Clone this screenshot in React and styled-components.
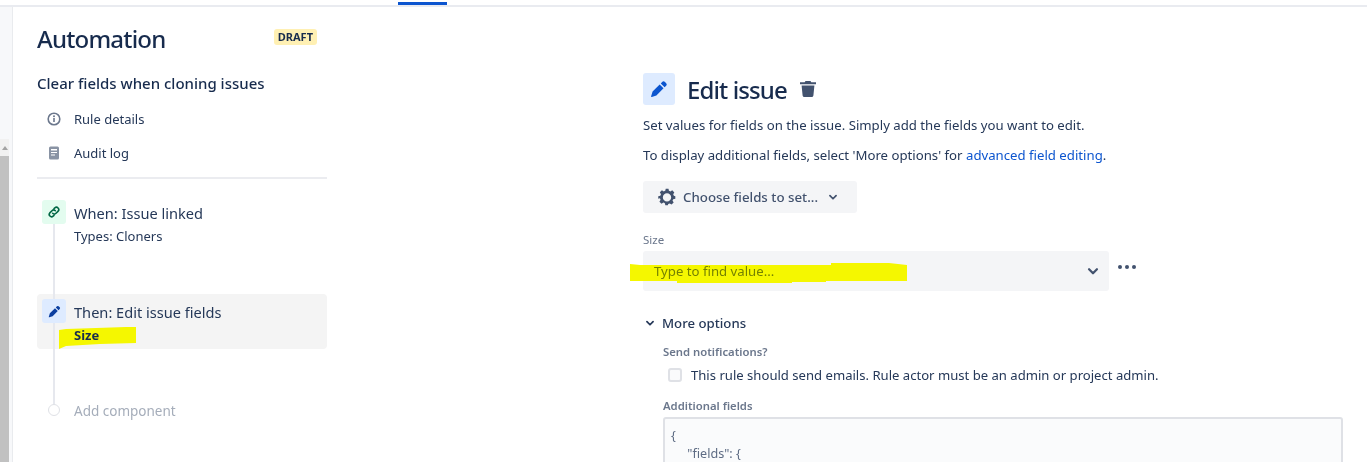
import React from "react";
import styled, { createGlobalStyle } from "styled-components";

const Global = createGlobalStyle`
  html, body { margin: 0; padding: 0; background: #fff; height: 462px; overflow: hidden; }
  body { font-family: "Noto Sans", "Open Sans", sans-serif; color: #172b4d; }
  * { box-sizing: border-box; }
`;

const Page = styled.div`
  width: 1367px; height: 462px; overflow: hidden; display: flex; flex-direction: column;
`;
const TopBar = styled.div`
  height: 7px; flex: none; padding-left: 398px; display: flex; align-items: flex-start;
  border-bottom: 2px solid #e9ebf0; background: #fff;
`;
const ActiveTab = styled.div`
  width: 49px; height: 3px; margin-top: 2px; background: #0c55cf;
`;
const Body = styled.div`
  flex: 1; display: flex; min-height: 0;
`;
const Gutter = styled.div`
  width: 13px; flex: none; display: flex; flex-direction: column; background: #f7f8fa;
  border-right: 1px solid #e9ebee;
`;
const ScrollSpace = styled.div` height: 132px; flex: none; `;
const ScrollTrack = styled.div`
  width: 9px; flex: 1; background: #f1f1f1; display: flex; flex-direction: column;
`;
const ScrollArrow = styled.div`
  height: 17px; flex: none; display: flex; align-items: center; justify-content: center;
  &::before { content: ""; border: 3px solid transparent; border-top: 0; border-bottom: 4px solid #a3a3a3; }
`;
const ScrollThumb = styled.div` flex: 1; background: #c1c1c1; `;

const Sidebar = styled.aside`
  width: 290px; flex: none; margin-left: 24px; padding-top: 16px;
`;
const SideHead = styled.div`
  display: flex; justify-content: space-between; align-items: flex-start; padding-right: 10px;
`;
const Title = styled.h1`
  margin: 0; font-size: 24px; line-height: 32px; font-weight: 500; letter-spacing: -0.8px;
`;
const Draft = styled.span`
  margin-top: 6px; background: #fff0b3; border-radius: 3px; padding: 0 4px; height: 16px;
  font-size: 11px; line-height: 16px; font-weight: 700; color: #172b4d;
`;
const RuleName = styled.h2`
  margin: 17px 0 0; font-size: 15px; line-height: 22px; font-weight: 500;
`;
const NavList = styled.nav`
  display: flex; flex-direction: column; gap: 12px; margin-top: 14px; padding: 0 0 13px 9px;
  border-bottom: 2px solid #ebecf0;
`;
const NavItem = styled.a`
  display: flex; align-items: center; gap: 12px; height: 22px; font-size: 13px; color: #253858;
  svg { flex: none; }
`;
const Timeline = styled.div`
  position: relative; margin-top: 16px;
  &::before { content: ""; position: absolute; left: 16px; top: 20px; width: 2px; height: 190px; background: #e6e8ee; z-index: 1; }
`;
const Step = styled.div`
  position: relative; display: flex; gap: 8px; padding: 5px; height: ${p => p.$h}px; border-radius: 4px;
  background: ${p => p.$active ? "#f4f4f4" : "transparent"};
  margin-bottom: ${p => p.$mb || 0}px;
`;
const StepIcon = styled.div`
  width: 24px; height: 24px; flex: none; border-radius: 3px; background: ${p => p.$bg};
  display: flex; align-items: center; justify-content: center; position: relative; z-index: 2;
`;
const StepText = styled.div` display: flex; flex-direction: column; padding-top: 1px; `;
const StepTitle = styled.div` font-size: 14.6px; line-height: 24px; color: #253858; `;
const StepSub = styled.div`
  font-size: 13px; line-height: 18px; margin-top: 2px; color: ${p => p.$bold ? "#172b4d" : "#253858"}; position: relative;
  font-weight: ${p => p.$bold ? 700 : 400};
`;
const SubLabel = styled.span` position: relative; `;
const AddRow = styled.div`
  position: relative; display: flex; align-items: center; gap: 14px; padding-left: 11px; height: 22px;
  margin-top: 51px; font-size: 13.5px; color: #a5adba;
`;
const Dot = styled.span`
  width: 12px; height: 12px; border-radius: 50%; border: 1px solid #dfe1e6; background: #fff; flex: none;
  margin-bottom: 2px; position: relative; z-index: 2;
`;

const Main = styled.main`
  margin-left: 316px; width: 700px; padding-top: 66px; flex: none;
`;
const Heading = styled.div` display: flex; align-items: center; height: 32px; `;
const HeadIcon = styled.div`
  width: 32px; height: 32px; border-radius: 3px; background: #deebff; display: flex;
  align-items: center; justify-content: center; margin-right: 12px;
`;
const HeadTitle = styled.h2`
  margin: 2px 11px 0 0; font-size: 24px; line-height: 32px; font-weight: 500; letter-spacing: -0.9px;
`;
const Para = styled.p`
  margin: 0; font-size: 13.2px; line-height: 20px; color: #253858;
  & + & { margin-top: 10px; }
  &:first-of-type { margin-top: 10px; }
`;
const Link = styled.a` color: #0c55cf; `;
const ChooseButton = styled.div`
  margin-top: 16px; width: 214px; height: 32px; border-radius: 3px; background: #f4f5f7;
  display: flex; align-items: center; padding-left: 14px; gap: 6px; font-size: 13.3px; font-weight: 500; color: #42526e;
  & > svg:last-child { margin-left: 2px; }
`;
const FieldLabel = styled.div`
  font-size: ${p => p.$bold ? 11.3 : 11.5}px; line-height: 16px; font-weight: ${p => p.$bold ? 600 : 400}; color: #6b778c;
  margin-top: ${p => p.$mt}px;
`;
const SelectRow = styled.div` display: flex; margin-top: 3px; gap: 8px; `;
const Select = styled.div`
  position: relative; width: 466px; height: 40px; border-radius: 3px; background: #f4f5f7; display: flex;
  align-items: center; justify-content: space-between; padding: 0 7px 0 11px;
`;
const Placeholder = styled.span` position: relative; font-size: 13.2px; color: #7a869a; mix-blend-mode: multiply; `;
const MoreDots = styled.svg` margin-top: 12px; `;
const Options = styled.section` margin-top: 22px; `;
const OptionsToggle = styled.div`
  display: flex; align-items: center; gap: 5px; height: 20px; font-size: 13.2px; font-weight: 500; color: #253858;
`;
const OptionsBody = styled.div` padding-left: 20px; `;
const CheckRow = styled.label`
  display: flex; align-items: center; gap: 9px; margin: 5px 0 0 5px; height: 20px; font-size: 13.1px; color: #253858;
`;
const Check = styled.span`
  width: 14px; height: 14px; border-radius: 3px; border: 2px solid #dfe1e6; background: #fafbfc; flex: none;
`;
const Code = styled.pre`
  margin: 3px 0 0; width: 680px; height: 80px; border: 2px solid #dfe1e6; border-radius: 3px; background: #fafbfc;
  padding: 8px 6px; font-family: "Noto Sans", sans-serif; font-size: 12.6px; line-height: 18px; color: #5e6c84;
`;
const Scribble = styled.svg`
  position: absolute; pointer-events: none; overflow: visible; left: ${p => p.$l}px; top: ${p => p.$t}px;
`;

const Pencil = ({ s = 14, c = "#0c3fa0" }) => (
  <svg width={s} height={s} viewBox="0 0 16 16"><path fill={c} d="M11 1.600a1.500 1.500 0 0 1 2.100 0l1.300 1.300a1.500 1.500 0 0 1 0 2.100L13 6.400 9.600 3zM8.600 4 12 7.400 5.700 13.700 1.600 15a.5.5 0 0 1-.6-.6l1.300-4.100z"/></svg>
);
const Chevron = ({ s = 16, c = "#42526e" }) => (
  <svg width={s} height={s} viewBox="0 0 16 16"><path fill="none" stroke={c} strokeWidth="2" strokeLinecap="round" strokeLinejoin="round" d="M4.500 6.500 8 10l3.500-3.500"/></svg>
);

export default function App() {
  return (
    <Page>
      <Global />
      <TopBar><ActiveTab /></TopBar>
      <Body>
        <Gutter>
          <ScrollSpace />
          <ScrollTrack><ScrollArrow /><ScrollThumb /></ScrollTrack>
        </Gutter>
        <Sidebar>
          <SideHead>
            <Title>Automation</Title>
            <Draft>DRAFT</Draft>
          </SideHead>
          <RuleName>Clear fields when cloning issues</RuleName>
          <NavList>
            <NavItem>
              <svg width="16" height="16" viewBox="0 0 16 16"><circle cx="8" cy="8" r="5.800" fill="none" stroke="#6b778c" strokeWidth="1.600"/><rect x="7.200" y="7" width="1.600" height="4" fill="#6b778c"/><circle cx="8" cy="5.200" r="1" fill="#6b778c"/></svg>
              Rule details
            </NavItem>
            <NavItem>
              <svg width="16" height="16" viewBox="0 0 16 16"><path fill="#8993a4" fillRule="evenodd" d="M4.500 1.500h7A1.500 1.500 0 0 1 13 3v10a1.500 1.500 0 0 1-1.500 1.500h-7A1.500 1.500 0 0 1 3 13V3a1.500 1.500 0 0 1 1.500-1.500zM5 4v1.500h6V4zm0 3v1h6V7zm0 2.500v1h4v-1z"/></svg>
              Audit log
            </NavItem>
          </NavList>
          <Timeline>
            <Step $h={60} $mb={39}>
              <StepIcon $bg="#e3fcef">
                <svg width="14" height="14" viewBox="0 0 16 16" fill="none" stroke="#006644" strokeWidth="1.800" strokeLinecap="round"><path d="M6.500 9.500a2.700 2.700 0 0 0 3.800 0l2.500-2.500a2.700 2.700 0 0 0-3.800-3.800l-1 1"/><path d="M9.500 6.500a2.700 2.700 0 0 0-3.800 0L3.200 9a2.700 2.700 0 0 0 3.800 3.800l1-1"/></svg>
              </StepIcon>
              <StepText>
                <StepTitle>When: Issue linked</StepTitle>
                <StepSub>Types: Cloners</StepSub>
              </StepText>
            </Step>
            <Step $h={55} $active>
              <StepIcon $bg="#deebff"><Pencil s={13} /></StepIcon>
              <StepText>
                <StepTitle>Then: Edit issue fields</StepTitle>
                <StepSub $bold>
                  <Scribble $l={-15} $t={0} width="77" height="23" viewBox="0 0 77 23"><path fill="#f5f700" d="M0 4 7 3 67 1 77 1 77 17 41 18 7 20 0 23z"/></Scribble>
                  <SubLabel>Size</SubLabel>
                </StepSub>
              </StepText>
            </Step>
            <AddRow><Dot />Add component</AddRow>
          </Timeline>
        </Sidebar>
        <Main>
          <Heading>
            <HeadIcon><Pencil s={18} c="#0c55cf" /></HeadIcon>
            <HeadTitle>Edit issue</HeadTitle>
            <svg width="20" height="20" viewBox="0 0 20 20"><path fill="#42526e" d="M7.500 2h5l.8 1.300H18v2H2v-2h4.700zM3.600 6.500h12.800l-1 10a1.800 1.800 0 0 1-1.800 1.500H6.400a1.800 1.800 0 0 1-1.800-1.500z"/></svg>
          </Heading>
          <Para>Set values for fields on the issue. Simply add the fields you want to edit.</Para>
          <Para>To display additional fields, select 'More options' for <Link>advanced field editing</Link>.</Para>
          <ChooseButton>
            <svg width="20" height="20" viewBox="0 0 24 24"><path fill="#42526e" fillRule="evenodd" d="M13.800 2l.5 2.600c.6.200 1.200.5 1.700.8l2.300-1.400 2.500 2.500-1.400 2.300c.4.500.6 1.100.8 1.700L22 11v3l-2.600.6c-.2.600-.5 1.200-.8 1.700l1.400 2.300-2.500 2.500-2.300-1.400c-.5.300-1.100.6-1.700.8L13 22h-3l-.6-2.500c-.6-.2-1.200-.5-1.700-.8l-2.300 1.400-2.500-2.500 1.400-2.300c-.3-.5-.6-1.100-.8-1.700L1.500 14v-3l2.500-.6c.2-.6.500-1.200.8-1.700L3.400 6.400l2.500-2.500 2.300 1.400c.5-.3 1.100-.6 1.700-.8L10.500 2zM12 7.500a5 5 0 1 0 0 10 5 5 0 0 0 0-10z"/></svg>
            Choose fields to set...
            <Chevron s={14} />
          </ChooseButton>
          <FieldLabel $mt={19}>Size</FieldLabel>
          <SelectRow>
            <Select>
              <Scribble $l={-13} $t={11} width="277" height="21" viewBox="0 0 277 21"><path fill="#f5f700" d="M0 2 10 3 201 3 201 1 259 1 277 3 277 19 196 19 196 20 162 20 162 21 47 21 47 19 0 19z"/></Scribble>
              <Placeholder>Type to find value...</Placeholder>
              <Chevron s={18} />
            </Select>
            <MoreDots width="20" height="8" viewBox="0 0 20 8"><g fill="#42526e"><circle cx="3" cy="4" r="2"/><circle cx="10" cy="4" r="2"/><circle cx="17" cy="4" r="2"/></g></MoreDots>
          </SelectRow>
          <Options>
            <OptionsToggle><Chevron s={14} c="#253858" />More options</OptionsToggle>
            <OptionsBody>
              <FieldLabel $mt={11} $bold>Send notifications?</FieldLabel>
              <CheckRow><Check />This rule should send emails. Rule actor must be an admin or project admin.</CheckRow>
              <FieldLabel $mt={13} $bold>Additional fields</FieldLabel>
              <Code>{"{\n     \"fields\": {"}</Code>
            </OptionsBody>
          </Options>
        </Main>
      </Body>
    </Page>
  );
}
